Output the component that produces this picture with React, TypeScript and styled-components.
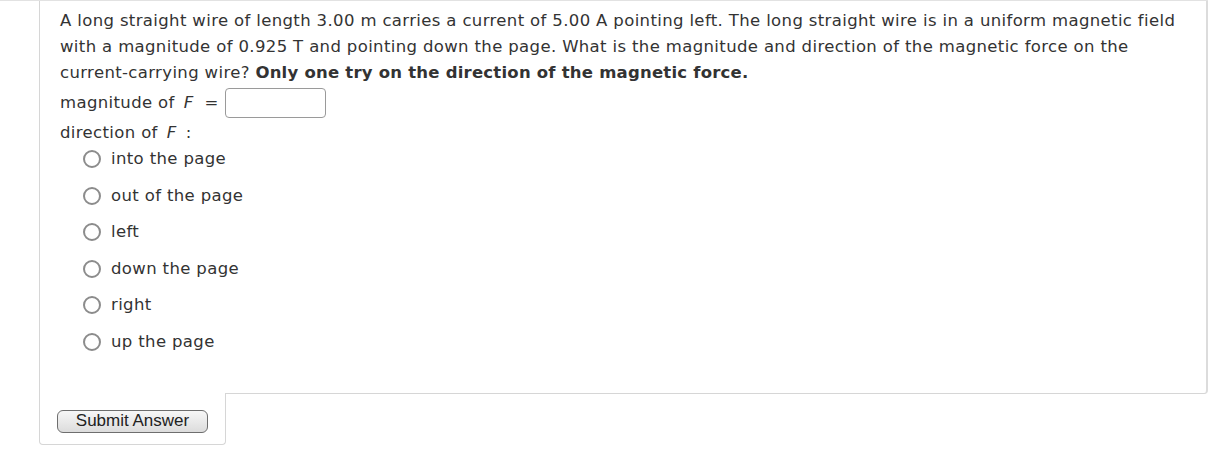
import React from "react";
import styled, { createGlobalStyle } from "styled-components";

const Global = createGlobalStyle`
  html, body { margin: 0; padding: 0; background: #fff; }
  body { font-family: "DejaVu Sans", Verdana, sans-serif; }
`;

const Page = styled.div`
  border-top: 1px solid #e2e2e2;
  padding-left: 39px;
  width: 1208px;
  box-sizing: border-box;
  padding-bottom: 5px;
`;

const Panel = styled.div`
  border-left: 1px solid #d6d6d6;
  border-right: 2px solid #dcdcdc;
  border-bottom: 1px solid #d6d6d6;
  border-bottom-right-radius: 4px;
  padding: 7px 20px 38px 20px;
  color: #333;
  font-size: 16.5px;
  line-height: 26px;
  letter-spacing: 0.36px;
`;

const Question = styled.p`
  margin: 0;
`;

const Strong = styled.b`
  font-weight: bold;
  letter-spacing: 0.22px;
`;

const AnswerRow = styled.div`
  display: flex;
  align-items: center;
  height: 34px;
`;

const Var = styled.i`
  font-style: italic;
  margin-left: 9px;
  margin-right: 9px;
`;

const Eq = styled.span`
  margin-left: 2px;
  margin-right: 6px;
`;

const NumInput = styled.input`
  width: 101px;
  height: 30px;
  box-sizing: border-box;
  border: 1px solid #9a9a9a;
  border-radius: 4px;
  background: #fff;
  padding: 0 6px;
  font: inherit;
`;

const Label = styled.div``;

const RadioList = styled.div`
  display: flex;
  flex-direction: column;
  gap: 10.5px;
  padding-left: 23px;
`;

const Option = styled.label`
  display: flex;
  align-items: center;
  height: 26px;
  gap: 10px;
`;

const Radio = styled.span`
  width: 18px;
  height: 18px;
  box-sizing: border-box;
  border: 2px solid #8c8c8c;
  border-radius: 50%;
  background: #fff;
  flex: none;
`;

const Tab = styled.div`
  width: 187px;
  box-sizing: border-box;
  margin-top: -1px;
  background: #fff;
  border-left: 1px solid #d6d6d6;
  border-right: 1px solid #d6d6d6;
  border-bottom: 1px solid #d6d6d6;
  border-bottom-left-radius: 4px;
  border-bottom-right-radius: 4px;
  padding: 17px 0 11px 17px;
`;

const SubmitButton = styled.button`
  width: 151px;
  height: 23px;
  box-sizing: border-box;
  border: 1px solid #6e6e6e;
  border-radius: 6px;
  background: linear-gradient(#f7f7f7, #dcdcdc);
  font-family: "Liberation Sans", Arial, sans-serif;
  font-size: 17px;
  color: #222;
  padding: 0;
  display: block;
  line-height: 20px;
`;

const options = [
  "into the page",
  "out of the page",
  "left",
  "down the page",
  "right",
  "up the page",
];

export default function App() {
  return (
    <>
      <Global />
      <Page>
        <Panel>
          <Question>
            A long straight wire of length 3.00 m carries a current of 5.00 A pointing left. The long
            straight wire is in a uniform magnetic field with a magnitude of 0.925 T and pointing down
            the page. What is the magnitude and direction of the magnetic force on the current-carrying
            wire? <Strong>Only one try on the direction of the magnetic force.</Strong>
          </Question>
          <AnswerRow>
            magnitude of<Var>F</Var>
            <Eq>=</Eq>
            <NumInput type="text" />
          </AnswerRow>
          <Label>
            direction of<Var>F</Var>:
          </Label>
          <RadioList>
            {options.map((o) => (
              <Option key={o}>
                <Radio />
                {o}
              </Option>
            ))}
          </RadioList>
        </Panel>
        <Tab>
          <SubmitButton>Submit Answer</SubmitButton>
        </Tab>
      </Page>
    </>
  );
}
